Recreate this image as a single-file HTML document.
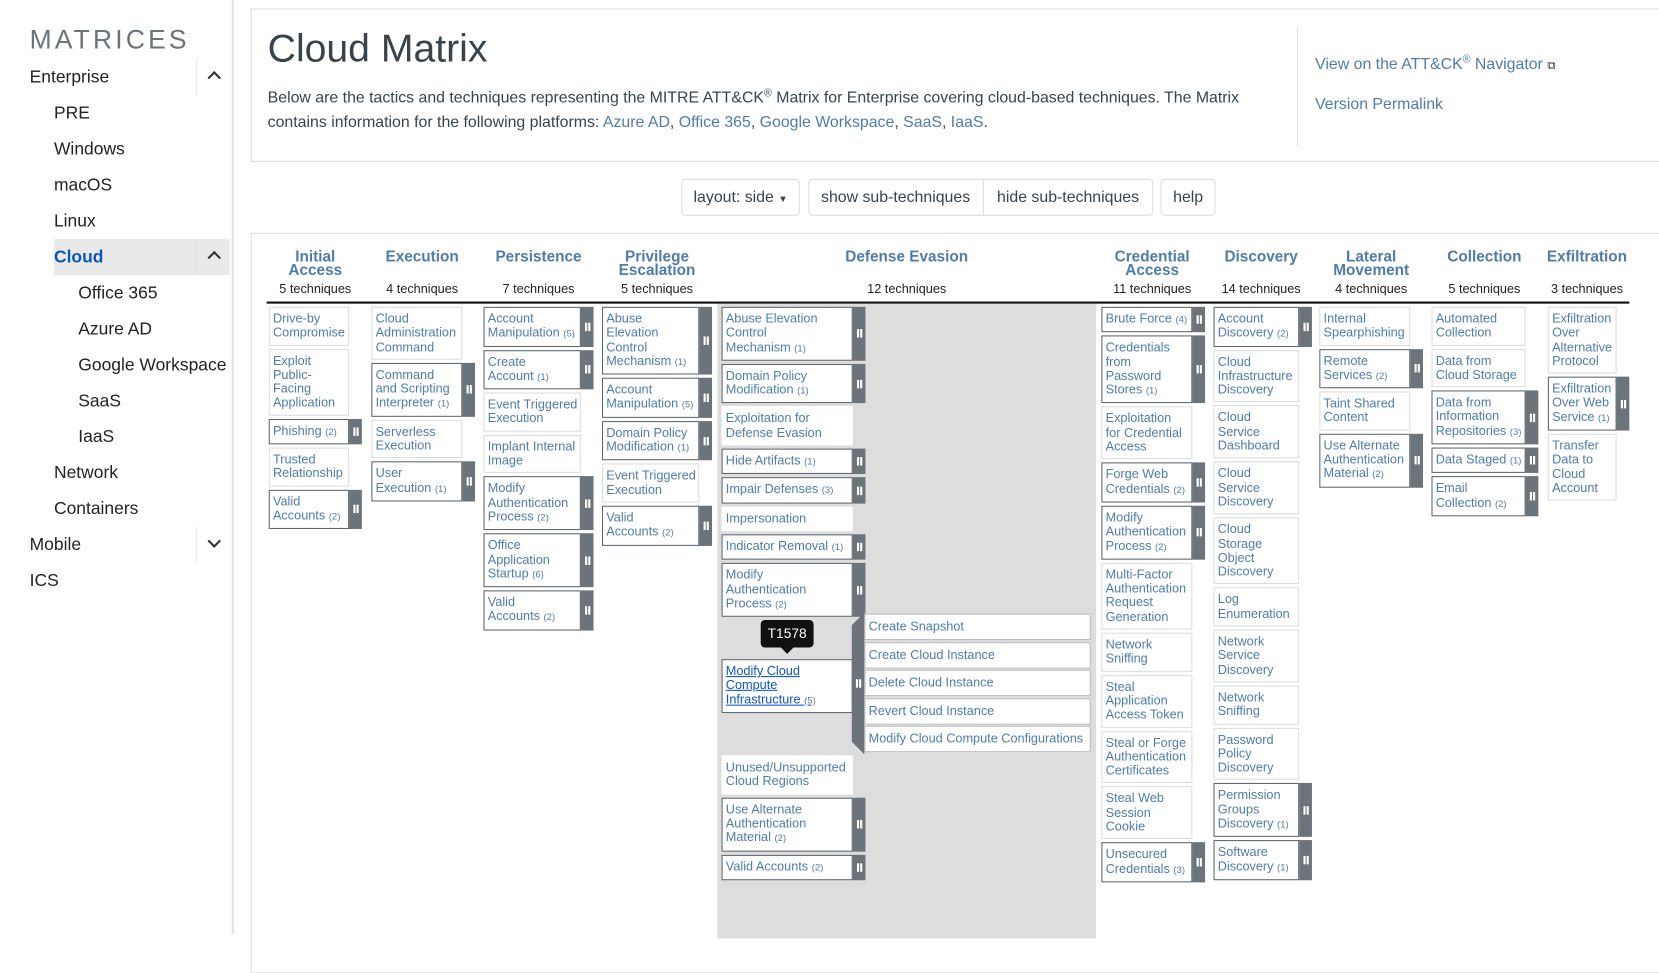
<!DOCTYPE html>
<html><head><meta charset="utf-8"><style>
*{box-sizing:border-box;margin:0;padding:0}
html,body{width:1659px;height:883px;overflow:hidden;background:#fff}
#w{position:absolute;left:0;top:0;width:1570px;height:840px;transform:scale(1.058);transform-origin:0 0;font-family:"Liberation Sans",sans-serif;color:#39434c}
.nav{position:absolute;left:0;top:0;width:221px;height:883px;border-right:2px solid #e3e3e3}
.nav h2{position:absolute;left:28px;top:24px;font-size:25px;font-weight:normal;letter-spacing:3px;color:#6b737b}
.nav .it{position:absolute;font-size:16.5px;color:#222;height:34px;line-height:34px;white-space:nowrap}
.nav .chev{position:absolute;width:32px;height:34px;border-left:1px solid #e6e6e6}
.nav .chev:after{content:"";position:absolute;left:12px;top:13px;width:7px;height:7px;border-left:2px solid #333;border-top:2px solid #333;transform:rotate(45deg)}
.nav .chev.dn:after{transform:rotate(225deg);top:9px}
.hdr{position:absolute;left:237px;top:8px;width:1333px;height:145px;border:1px solid #ddd;border-right:none}
.hdr h1{position:absolute;left:15px;top:16px;font-size:37px;font-weight:normal;color:#39434c}
.hdr p{position:absolute;left:15px;top:68px;width:960px;font-size:15px;line-height:23px;color:#39434c}
a{color:#4f7cac;text-decoration:none}
.vd{position:absolute;left:988px;top:16px;height:113px;border-left:1px solid #ddd}
.rl{position:absolute;left:1005px;font-size:15px;white-space:nowrap}
.btn{position:absolute;top:169px;height:35px;border:1px solid #ddd;border-radius:4px;font-size:15px;line-height:33px;text-align:center;color:#39434c}
.mx{position:absolute;left:237px;top:220px;width:1333px;height:700px;border:1px solid #ddd;border-right:none}
.th{position:absolute;top:237px;text-align:center;color:#4f7cac;font-weight:bold;font-size:14.5px;line-height:13px}
.cnt{position:absolute;top:266px;font-size:12px;text-align:center;color:#222}
.rule{position:absolute;left:252px;top:285px;width:1288px;height:2px;background:#111}
.gray{position:absolute;left:678px;top:287px;width:358px;height:600px;background:#ddd}
.col{position:absolute;top:290px}
.t{position:relative;background:#fff;border:1px solid #ddd;padding:4px 3px;margin-bottom:3px;font-size:12px;line-height:13.3px;color:#4f7cac;white-space:nowrap}
.col5 .t{border-color:#fff}
.t small{font-size:9px}
.t.s{border-color:#5f666d}
.t.s i{position:absolute;right:-13px;top:-1px;bottom:-1px;width:12px;background:#6b737b}
.t.s i:before,.t.s i:after{content:"";position:absolute;top:50%;margin-top:-4px;width:2px;height:8px;background:#fff;left:4px}
.t.s i:after{left:7px}
.st{position:absolute;left:817px;width:214px;background:#fff;border:1px solid #bbb;font-size:12px;line-height:13.3px;padding:5px 3px;color:#4f7cac;white-space:nowrap}
</style></head><body><div id="w">
<div class="nav">
<h2>MATRICES</h2>
<div class="it" style="left:28px;top:56px">Enterprise</div><div class="chev" style="left:185px;top:56px"></div>
<div class="it" style="left:51px;top:90px">PRE</div>
<div class="it" style="left:51px;top:124px">Windows</div>
<div class="it" style="left:51px;top:158px">macOS</div>
<div class="it" style="left:51px;top:192px">Linux</div>
<div style="position:absolute;left:51px;top:226px;width:166px;height:34px;background:#e9e9e9"></div>
<div class="it" style="left:51px;top:226px;color:#0b57c0;font-weight:bold">Cloud</div><div class="chev" style="left:185px;top:226px"></div>
<div class="it" style="left:74px;top:260px">Office 365</div>
<div class="it" style="left:74px;top:294px">Azure AD</div>
<div class="it" style="left:74px;top:328px">Google Workspace</div>
<div class="it" style="left:74px;top:362px">SaaS</div>
<div class="it" style="left:74px;top:396px">IaaS</div>
<div class="it" style="left:51px;top:430px">Network</div>
<div class="it" style="left:51px;top:464px">Containers</div>
<div class="it" style="left:28px;top:498px">Mobile</div><div class="chev dn" style="left:185px;top:498px"></div>
<div class="it" style="left:28px;top:532px">ICS</div>
</div>

<div class="hdr">
<h1>Cloud Matrix</h1>
<p>Below are the tactics and techniques representing the MITRE ATT&amp;CK<sup style="font-size:10px">®</sup> Matrix for Enterprise covering cloud-based techniques. The Matrix contains information for the following platforms: <a>Azure AD</a>, <a>Office 365</a>, <a>Google Workspace</a>, <a>SaaS</a>, <a>IaaS</a>.</p>
<div class="vd"></div>
<a class="rl" style="top:42px">View on the ATT&amp;CK<sup style="font-size:10px">®</sup> Navigator <span style="font-size:11px;color:#333">⧉</span></a>
<a class="rl" style="top:81px">Version Permalink</a>
</div>

<div class="btn" style="left:644px;width:112px">layout: side <span style="font-size:9px">▼</span></div>
<div class="btn" style="left:764px;width:326px"></div>
<div style="position:absolute;left:764px;top:170px;width:166px;font-size:15px;line-height:33px;text-align:center;border-right:1px solid #ddd">show sub-techniques</div>
<div style="position:absolute;left:930px;top:170px;width:159px;font-size:15px;line-height:33px;text-align:center">hide sub-techniques</div>
<div class="btn" style="left:1097px;width:52px">help</div>

<div class="mx"></div>
<div class="gray"></div>

<div class="th" style="left:248px;width:100px">Initial<br>Access</div><div class="cnt" style="left:248px;width:100px">5 techniques</div>
<div class="th" style="left:349px;width:100px;top:237px">Execution</div><div class="cnt" style="left:349px;width:100px">4 techniques</div>
<div class="th" style="left:454px;width:110px">Persistence</div><div class="cnt" style="left:454px;width:110px">7 techniques</div>
<div class="th" style="left:566px;width:110px">Privilege<br>Escalation</div><div class="cnt" style="left:566px;width:110px">5 techniques</div>
<div class="th" style="left:757px;width:200px">Defense Evasion</div><div class="cnt" style="left:757px;width:200px">12 techniques</div>
<div class="th" style="left:1034px;width:110px">Credential<br>Access</div><div class="cnt" style="left:1034px;width:110px">11 techniques</div>
<div class="th" style="left:1142px;width:100px">Discovery</div><div class="cnt" style="left:1142px;width:100px">14 techniques</div>
<div class="th" style="left:1246px;width:100px">Lateral<br>Movement</div><div class="cnt" style="left:1246px;width:100px">4 techniques</div>
<div class="th" style="left:1353px;width:100px">Collection</div><div class="cnt" style="left:1353px;width:100px">5 techniques</div>
<div class="th" style="left:1460px;width:80px">Exfiltration</div><div class="cnt" style="left:1460px;width:80px">3 techniques</div>
<div class="rule"></div>

<div class="col" style="left:254px;width:76px">
<div class="t">Drive-by<br>Compromise</div>
<div class="t">Exploit<br>Public-<br>Facing<br>Application</div>
<div class="t s">Phishing <small>(2)</small><i></i></div>
<div class="t">Trusted<br>Relationship</div>
<div class="t s">Valid<br>Accounts <small>(2)</small><i></i></div>
</div>

<div class="col" style="left:351px;width:86px">
<div class="t">Cloud<br>Administration<br>Command</div>
<div class="t s">Command<br>and Scripting<br>Interpreter <small>(1)</small><i></i></div>
<div class="t">Serverless<br>Execution</div>
<div class="t s">User<br>Execution <small>(1)</small><i></i></div>
</div>

<div class="col" style="left:457px;width:92px">
<div class="t s">Account<br>Manipulation <small>(5)</small><i></i></div>
<div class="t s">Create<br>Account <small>(1)</small><i></i></div>
<div class="t">Event Triggered<br>Execution</div>
<div class="t">Implant Internal<br>Image</div>
<div class="t s">Modify<br>Authentication<br>Process <small>(2)</small><i></i></div>
<div class="t s">Office<br>Application<br>Startup <small>(6)</small><i></i></div>
<div class="t s">Valid<br>Accounts <small>(2)</small><i></i></div>
</div>

<div class="col" style="left:569px;width:92px">
<div class="t s">Abuse<br>Elevation<br>Control<br>Mechanism <small>(1)</small><i></i></div>
<div class="t s">Account<br>Manipulation <small>(5)</small><i></i></div>
<div class="t s">Domain Policy<br>Modification <small>(1)</small><i></i></div>
<div class="t">Event Triggered<br>Execution</div>
<div class="t s">Valid<br>Accounts <small>(2)</small><i></i></div>
</div>

<div class="col col5" style="left:682px;width:124px">
<div class="t s">Abuse Elevation<br>Control<br>Mechanism <small>(1)</small><i></i></div>
<div class="t s">Domain Policy<br>Modification <small>(1)</small><i></i></div>
<div class="t">Exploitation for<br>Defense Evasion</div>
<div class="t s">Hide Artifacts <small>(1)</small><i></i></div>
<div class="t s">Impair Defenses <small>(3)</small><i></i></div>
<div class="t">Impersonation</div>
<div class="t s">Indicator Removal <small>(1)</small><i></i></div>
<div class="t s">Modify<br>Authentication<br>Process <small>(2)</small><i></i></div>
<div style="height:128px;position:relative">
<div class="t s" style="position:absolute;top:37px;left:0;width:124px;color:#0b57c0;text-decoration:underline">Modify Cloud<br>Compute<br>Infrastructure <small style="color:#4f7cac">(5)</small><i style="display:none"></i></div>
</div>
<div class="t">Unused/Unsupported<br>Cloud Regions</div>
<div class="t s">Use Alternate<br>Authentication<br>Material <small>(2)</small><i></i></div>
<div class="t s">Valid Accounts <small>(2)</small><i></i></div>
</div>
<svg style="position:absolute;left:805px;top:579px" width="13" height="134"><polygon points="0,12 12,0 12,134 0,122" fill="#6b737b"/><rect x="4" y="63" width="2" height="8" fill="#fff"/><rect x="7" y="63" width="2" height="8" fill="#fff"/></svg>
<div class="st" style="top:580px">Create Snapshot</div>
<div class="st" style="top:607px">Create Cloud Instance</div>
<div class="st" style="top:633px">Delete Cloud Instance</div>
<div class="st" style="top:660px">Revert Cloud Instance</div>
<div class="st" style="top:686px">Modify Cloud Compute Configurations</div>
<div style="position:absolute;left:719px;top:586px;width:50px;height:26px;background:#111;border-radius:4px;color:#fff;font-size:13px;line-height:26px;text-align:center">T1578</div>
<div style="position:absolute;left:738px;top:612px;width:0;height:0;border-left:6px solid transparent;border-right:6px solid transparent;border-top:6px solid #111"></div>

<div class="col" style="left:1041px;width:86px">
<div class="t s">Brute Force <small>(4)</small><i></i></div>
<div class="t s">Credentials<br>from<br>Password<br>Stores <small>(1)</small><i></i></div>
<div class="t">Exploitation<br>for Credential<br>Access</div>
<div class="t s">Forge Web<br>Credentials <small>(2)</small><i></i></div>
<div class="t s">Modify<br>Authentication<br>Process <small>(2)</small><i></i></div>
<div class="t">Multi-Factor<br>Authentication<br>Request<br>Generation</div>
<div class="t">Network<br>Sniffing</div>
<div class="t">Steal<br>Application<br>Access Token</div>
<div class="t">Steal or Forge<br>Authentication<br>Certificates</div>
<div class="t">Steal Web<br>Session<br>Cookie</div>
<div class="t s">Unsecured<br>Credentials <small>(3)</small><i></i></div>
</div>

<div class="col" style="left:1147px;width:81px">
<div class="t s">Account<br>Discovery <small>(2)</small><i></i></div>
<div class="t">Cloud<br>Infrastructure<br>Discovery</div>
<div class="t">Cloud<br>Service<br>Dashboard</div>
<div class="t">Cloud<br>Service<br>Discovery</div>
<div class="t">Cloud<br>Storage<br>Object<br>Discovery</div>
<div class="t">Log<br>Enumeration</div>
<div class="t">Network<br>Service<br>Discovery</div>
<div class="t">Network<br>Sniffing</div>
<div class="t">Password<br>Policy<br>Discovery</div>
<div class="t s">Permission<br>Groups<br>Discovery <small>(1)</small><i></i></div>
<div class="t s">Software<br>Discovery <small>(1)</small><i></i></div>
</div>

<div class="col" style="left:1247px;width:86px">
<div class="t">Internal<br>Spearphishing</div>
<div class="t s">Remote<br>Services <small>(2)</small><i></i></div>
<div class="t">Taint Shared<br>Content</div>
<div class="t s">Use Alternate<br>Authentication<br>Material <small>(2)</small><i></i></div>
</div>

<div class="col" style="left:1353px;width:89px">
<div class="t">Automated<br>Collection</div>
<div class="t">Data from<br>Cloud Storage</div>
<div class="t s">Data from<br>Information<br>Repositories <small>(3)</small><i></i></div>
<div class="t s">Data Staged <small>(1)</small><i></i></div>
<div class="t s">Email<br>Collection <small>(2)</small><i></i></div>
</div>

<div class="col" style="left:1463px;width:65px">
<div class="t">Exfiltration<br>Over<br>Alternative<br>Protocol</div>
<div class="t s">Exfiltration<br>Over Web<br>Service <small>(1)</small><i></i></div>
<div class="t">Transfer<br>Data to<br>Cloud<br>Account</div>
</div>
</div></body></html>
